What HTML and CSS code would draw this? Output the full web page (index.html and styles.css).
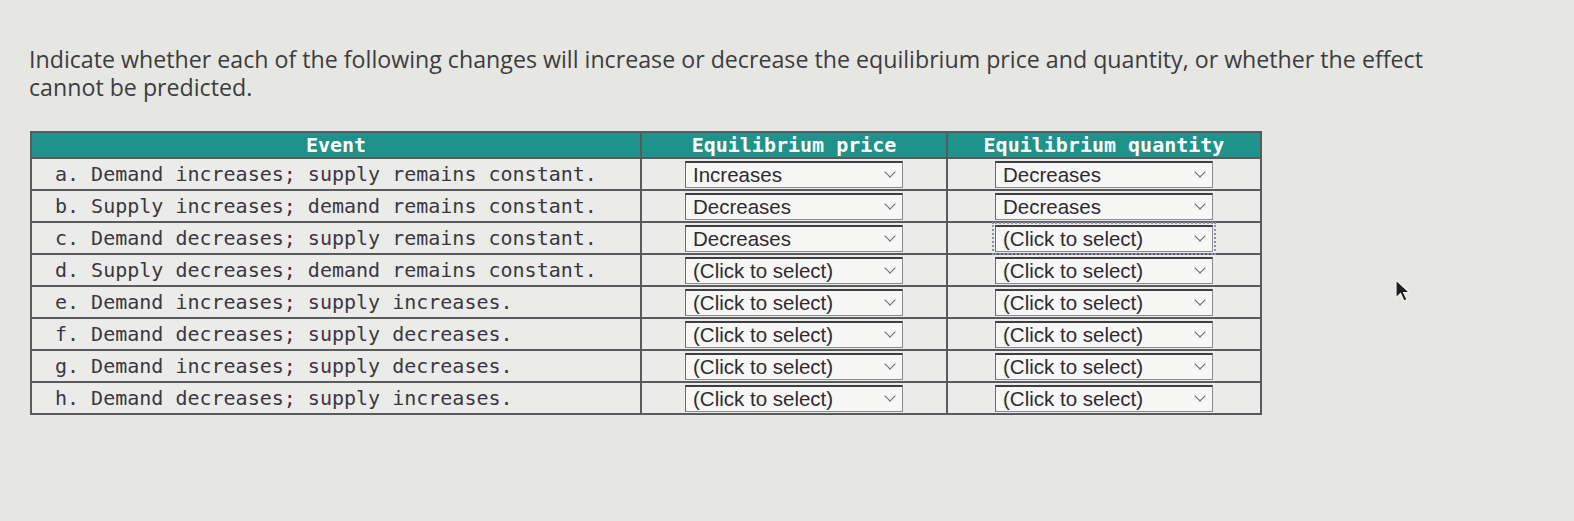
FILE: index.html
```html
<!DOCTYPE html>
<html>
<head>
<meta charset="utf-8">
<link rel="stylesheet" href="styles.css">
</head>
<body>
<div class="page">
  <p class="prompt">Indicate whether each of the following changes will increase or decrease the equilibrium price and quantity, or whether the effect cannot be predicted.</p>
  <table class="grid">
    <colgroup><col class="c-event"><col class="c-price"><col class="c-qty"></colgroup>
    <thead>
      <tr><th>Event</th><th>Equilibrium price</th><th>Equilibrium quantity</th></tr>
    </thead>
    <tbody>
      <tr><td class="ev">a. Demand increases; supply remains constant.</td>
        <td class="sel-p"><div class="sel"><span>Increases</span><i class="chev"></i></div></td>
        <td class="sel-q"><div class="sel"><span>Decreases</span><i class="chev"></i></div></td></tr>
      <tr><td class="ev">b. Supply increases; demand remains constant.</td>
        <td class="sel-p"><div class="sel"><span>Decreases</span><i class="chev"></i></div></td>
        <td class="sel-q"><div class="sel"><span>Decreases</span><i class="chev"></i></div></td></tr>
      <tr><td class="ev">c. Demand decreases; supply remains constant.</td>
        <td class="sel-p"><div class="sel"><span>Decreases</span><i class="chev"></i></div></td>
        <td class="sel-q"><div class="sel focus"><span>(Click to select)</span><i class="chev"></i></div></td></tr>
      <tr><td class="ev">d. Supply decreases; demand remains constant.</td>
        <td class="sel-p"><div class="sel"><span>(Click to select)</span><i class="chev"></i></div></td>
        <td class="sel-q"><div class="sel"><span>(Click to select)</span><i class="chev"></i></div></td></tr>
      <tr><td class="ev">e. Demand increases; supply increases.</td>
        <td class="sel-p"><div class="sel"><span>(Click to select)</span><i class="chev"></i></div></td>
        <td class="sel-q"><div class="sel"><span>(Click to select)</span><i class="chev"></i></div></td></tr>
      <tr><td class="ev">f. Demand decreases; supply decreases.</td>
        <td class="sel-p"><div class="sel"><span>(Click to select)</span><i class="chev"></i></div></td>
        <td class="sel-q"><div class="sel"><span>(Click to select)</span><i class="chev"></i></div></td></tr>
      <tr><td class="ev">g. Demand increases; supply decreases.</td>
        <td class="sel-p"><div class="sel"><span>(Click to select)</span><i class="chev"></i></div></td>
        <td class="sel-q"><div class="sel"><span>(Click to select)</span><i class="chev"></i></div></td></tr>
      <tr><td class="ev">h. Demand decreases; supply increases.</td>
        <td class="sel-p"><div class="sel"><span>(Click to select)</span><i class="chev"></i></div></td>
        <td class="sel-q"><div class="sel"><span>(Click to select)</span><i class="chev"></i></div></td></tr>
    </tbody>
  </table>
</div>
<svg class="cursor" width="18" height="26" viewBox="0 0 18 26"><path d="M2 2 L2 20 L6.5 15.5 L10 23 L13 21.6 L9.6 14.5 L15.5 14.5 Z" fill="#1e1e1e" stroke="#f2f2f2" stroke-width="1.2"/></svg>
</body>
</html>
```

FILE: styles.css
```css
html, body {
  margin: 0;
  padding: 0;
  background: #e6e6e3;
}
body {
  width: 1574px;
  height: 521px;
  overflow: hidden;
  position: relative;
}
.page {
  padding: 45px 0 0 29px;
}
.prompt {
  margin: 0;
  width: 1440px;
  font-family: "Open Sans", "Liberation Sans", sans-serif;
  font-size: 23.2px;
  line-height: 28px;
  color: #3c3c40;
}
.grid {
  margin-top: 30px;
  margin-left: 1px;
  border-collapse: collapse;
  background: #ebebe9;
}
.c-event { width: 610px; }
.c-price { width: 306px; }
.c-qty { width: 314px; }
.grid th {
  background: #1e938b;
  color: #ffffff;
  font-family: "DejaVu Sans Mono", "Liberation Mono", monospace;
  font-weight: bold;
  font-size: 20px;
  height: 24px;
  padding: 0;
  border: 2px solid #5a5a5e;
  text-align: center;
  line-height: 22px;
}
.grid td {
  border: 2px solid #5a5a5e;
  height: 30px;
  padding: 0;
}
.ev {
  font-family: "DejaVu Sans Mono", "Liberation Mono", monospace;
  font-size: 20px;
  color: #3a3742;
  padding-left: 23px !important;
}
.sel-p { padding-left: 43px !important; }
.sel-q { padding-left: 47px !important; }
.sel {
  width: 218px;
  height: 27px;
  box-sizing: border-box;
  background: #f7f7f6;
  border: 1px solid #8a8a8e;
  border-top: 2px solid #3d3d42;
  border-left: 1px solid #6a6a6e;
  display: flex;
  align-items: center;
  justify-content: space-between;
  padding: 0 8px 0 7px;
  font-family: "Liberation Sans", Arial, sans-serif;
  font-size: 20.5px;
  color: #2e2b33;
}
.sel.focus {
  outline: 2px dotted #8a8fb0;
  outline-offset: 1px;
}
.chev {
  width: 7px;
  height: 7px;
  border-right: 1.5px solid #6a6a70;
  border-bottom: 1.5px solid #6a6a70;
  transform: rotate(45deg);
  margin-top: -5px;
}
.cursor {
  position: absolute;
  left: 1394px;
  top: 278px;
}
```
